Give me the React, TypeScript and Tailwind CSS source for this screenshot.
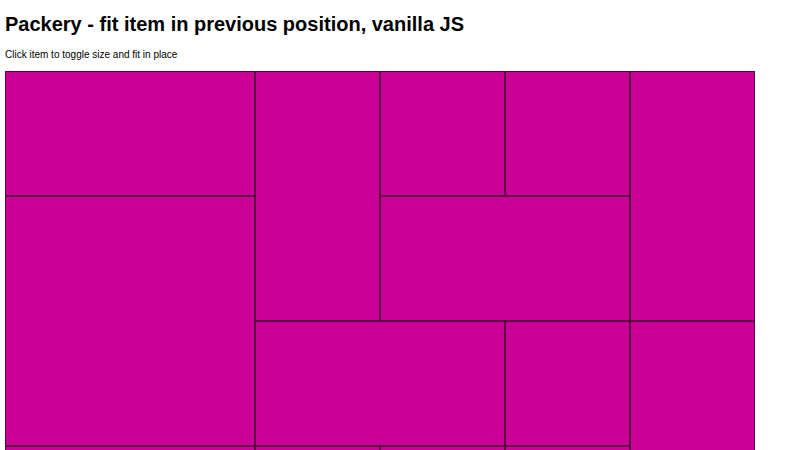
const items = [
  "col-start-1 col-span-2 row-start-1",
  "col-start-3 row-start-1 row-span-2",
  "col-start-4 row-start-1",
  "col-start-5 row-start-1",
  "col-start-6 row-start-1 row-span-2",
  "col-start-1 col-span-2 row-start-2 row-span-2",
  "col-start-4 col-span-2 row-start-2",
  "col-start-3 col-span-2 row-start-3",
  "col-start-5 row-start-3",
  "col-start-6 row-start-3 row-span-2",
  "col-start-1 col-span-2 row-start-4",
  "col-start-3 row-start-4",
  "col-start-4 row-start-4",
  "col-start-5 row-start-4",
];

export default function App() {
  return (
    <div className="min-h-screen bg-white px-[5px] font-['Liberation_Sans',Arial,sans-serif] text-black">
      <h1 className="pt-[12px] text-[20px] font-bold leading-[24px]">
        Packery - fit item in previous position, vanilla JS
      </h1>
      <p className="mt-[13px] text-[10px] leading-[12px]">Click item to toggle size and fit in place</p>

      {/* packery grid */}
      <div className="mt-[10px] grid w-[750px] grid-cols-[repeat(6,125px)] auto-rows-[125px]">
        {items.map((cls, i) => (
          <div
            key={i}
            className={`${cls} cursor-pointer border border-[rgba(0,0,0,0.55)] bg-[#cc0099]`}
          />
        ))}
      </div>
    </div>
  );
}
